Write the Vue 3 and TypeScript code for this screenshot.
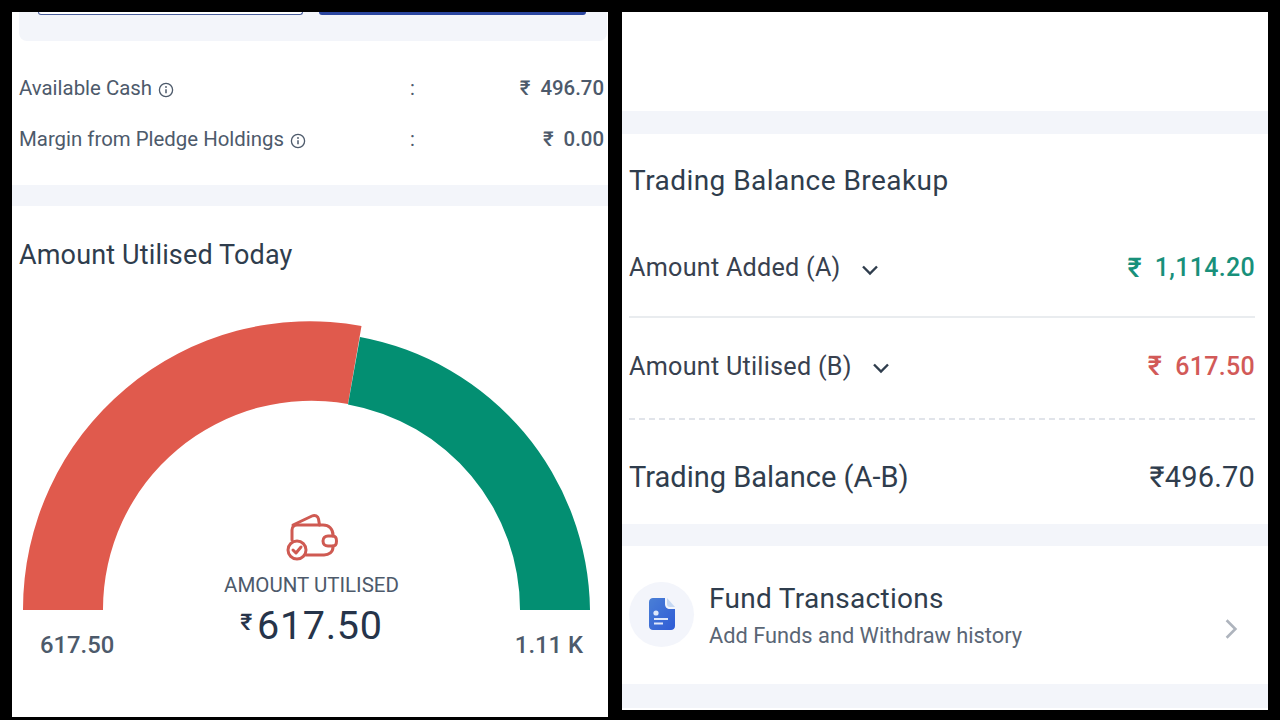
<template>
  <main class="screen">
    <section class="panel left">
      <div class="action-card">
        <div class="btn outline"></div>
        <div class="btn solid"></div>
      </div>

      <div class="cash-rows">
        <div v-for="row in cashRows" :key="row.label" class="cash-row">
          <span class="cash-label">
            {{ row.label }}
            <svg class="info" viewBox="0 0 16 16">
              <circle cx="8" cy="8" r="6.6" fill="none" stroke="currentColor" stroke-width="1.3" />
              <circle cx="8" cy="5" r="0.9" fill="currentColor" />
              <path d="M8 7.3v4" stroke="currentColor" stroke-width="1.5" />
            </svg>
          </span>
          <span class="colon">:</span>
          <span class="cash-value"><span class="rupee">₹</span>{{ row.value }}</span>
        </div>
      </div>

      <div class="band first-band"></div>

      <h2 class="gauge-title">Amount Utilised Today</h2>

      <div class="gauge">
        <svg class="arc" viewBox="0 0 596 300" width="596" height="300">
          <path fill="#e05a4d" d="M11 298 A287 288 0 0 1 349.500 14 L336 92 A208.500 208.500 0 0 0 91 298 Z" />
          <path fill="#038f72" d="M348 25 A281 281 0 0 1 578 298 L508 298 A208.500 208.500 0 0 0 336 92.500 Z" />
        </svg>
        <div class="gauge-center">
          <svg class="wallet" viewBox="0 0 52 50" fill="none" stroke="#cf5a52" stroke-width="3" stroke-linecap="round" stroke-linejoin="round">
            <path d="M6 27V17C6 14 8 12 11 12H37C43 12 47 16 47 22V23" />
            <path d="M7 12L26 3C29 1.500 32 3 32.500 6L33.500 12" />
            <path d="M47 33V34C47 39 43 42 38 42H20" />
            <path d="M42 23H47C49.500 23 50.500 25 50.500 28C50.500 31 49.500 33 47 33H42C39 33 37 31 37 28C37 25 39 23 42 23Z" />
            <circle cx="11" cy="37" r="9" />
            <path d="M7 37L10 40L15 34" />
          </svg>
          <div class="center-label">AMOUNT UTILISED</div>
          <div class="center-amount"><span class="center-rupee">₹</span>617.50</div>
        </div>
      </div>

      <div class="gauge-ends">
        <span>617.50</span>
        <span>1.11 K</span>
      </div>
    </section>

    <section class="panel right">
      <div class="top-blank"></div>
      <div class="band"></div>

      <div class="breakup">
        <h2 class="breakup-title">Trading Balance Breakup</h2>

        <div class="line added">
          <span class="line-label">
            Amount Added (A)
            <svg class="chev" viewBox="0 0 18 12"><path d="M2 2.500L9 9.500L16 2.500" /></svg>
          </span>
          <span class="amount green"><span class="rupee big">₹</span>1,114.20</span>
        </div>

        <div class="line utilised">
          <span class="line-label">
            Amount Utilised (B)
            <svg class="chev" viewBox="0 0 18 12"><path d="M2 2.500L9 9.500L16 2.500" /></svg>
          </span>
          <span class="amount red"><span class="rupee big">₹</span>617.50</span>
        </div>

        <div class="line total">
          <span class="total-label">Trading Balance (A-B)</span>
          <span class="total-value">₹496.70</span>
        </div>
      </div>

      <div class="band mid-band"></div>

      <div class="fund-row">
        <div class="doc-circle">
          <svg class="doc" viewBox="0 0 26 32">
            <defs>
              <linearGradient id="docFill" x1="0" y1="0" x2="1" y2="1">
                <stop offset="0" stop-color="#4a7fd6" />
                <stop offset="1" stop-color="#2f5cd6" />
              </linearGradient>
            </defs>
            <path fill="url(#docFill)" d="M4 0H16V6C16 9 18 11 21 11H26V28C26 30.500 24 32 22 32H4C2 32 0 30.500 0 28V4C0 1.500 2 0 4 0Z" />
            <path fill="#c6d8f3" d="M18 0L26 9H21C19 9 18 8 18 6Z" />
            <circle cx="7" cy="15" r="2.600" fill="#dfe8fa" />
            <path d="M5 21H19M5 25.500H14" stroke="#dfe8fa" stroke-width="2" />
          </svg>
        </div>
        <div class="fund-text">
          <div class="fund-title">Fund Transactions</div>
          <div class="fund-sub">Add Funds and Withdraw history</div>
        </div>
        <svg class="fund-arrow" viewBox="0 0 16 24"><path d="M3 2L13 12L3 22" /></svg>
      </div>

      <div class="band last-band"></div>
    </section>
  </main>
</template>

<script setup lang="ts">
const cashRows = [
  { label: 'Available Cash', value: '496.70' },
  { label: 'Margin from Pledge Holdings', value: '0.00' },
];
</script>

<style>
html,
body {
  margin: 0;
  background: #000;
}
</style>

<style scoped>
.screen {
  width: 1280px;
  height: 720px;
  background: #000;
  display: flex;
  align-items: flex-start;
  gap: 14px;
  padding: 12px 12px 0;
  box-sizing: border-box;
  overflow: hidden;
  font-family: Roboto, "Noto Sans", sans-serif;
  color: #2f3d4d;
}

.panel {
  background: #fff;
  flex-shrink: 0;
  overflow: hidden;
}
.panel.left {
  width: 596px;
  height: 705px;
}
.panel.right {
  width: 646px;
  height: 698px;
}

.band {
  height: 23px;
  background: #f3f5fa;
}

/* left side */
.action-card {
  margin-left: 7px;
  margin-right: 1px;
  height: 29px;
  background: #f3f5fa;
  border-radius: 0 0 8px 8px;
  display: flex;
  gap: 16px;
  padding-left: 19px;
  box-sizing: border-box;
}
.btn {
  height: 3px;
  border-radius: 0 0 4px 4px;
}
.btn.outline {
  width: 265px;
  box-sizing: border-box;
  background: #fff;
  border: 1px solid #4a5f9c;
  border-top: 0;
}
.btn.solid {
  width: 267px;
  background: #2b46a0;
}

.cash-rows {
  padding: 32px 4px 0 7px;
  height: 144px;
  box-sizing: border-box;
  display: flex;
  flex-direction: column;
  gap: 21px;
}
.cash-row {
  display: grid;
  grid-template-columns: 391px 30px 1fr;
  align-items: center;
  height: 30px;
  font-size: 20.400px;
  color: #4d5a6b;
}
.cash-label {
  display: flex;
  align-items: center;
  gap: 6px;
  white-space: nowrap;
}
.info {
  width: 16px;
  height: 16px;
  margin-top: 3px;
}
.colon {
  font-size: 20px;
}
.cash-value {
  text-align: right;
  font-weight: 500;
  white-space: nowrap;
}
.rupee {
  margin-right: 10px;
}
.rupee.big {
  font-size: 27px;
  margin-right: 13px;
}

.first-band {
  height: 21px;
}

.gauge-title {
  margin: 0;
  padding: 32px 0 0 7px;
  height: 65px;
  box-sizing: border-box;
  font-size: 27px;
  line-height: 34px;
  font-weight: 400;
  letter-spacing: 0.15px;
  color: #2f3d4d;
}

.gauge {
  position: relative;
  width: 596px;
  height: 300px;
  margin-top: 41px;
}
.arc {
  display: block;
}
.gauge-center {
  position: absolute;
  left: 150px;
  right: 147px;
  top: 201px;
  display: flex;
  flex-direction: column;
  align-items: center;
}
.wallet {
  width: 52px;
  height: 50px;
}
.center-label {
  margin-top: 10px;
  font-size: 20.500px;
  line-height: 24px;
  color: #4d5a6b;
  white-space: nowrap;
}
.center-amount {
  font-size: 39.500px;
  line-height: 46px;
  letter-spacing: 0.7px;
  color: #26344a;
  white-space: nowrap;
  display: flex;
  margin-top: 6px;
}
.center-rupee {
  font-size: 23px;
  font-weight: 500;
  line-height: 40px;
  margin-right: 4px;
}

.gauge-ends {
  display: flex;
  justify-content: space-between;
  padding: 16px 25px 0 28px;
  font-size: 23.800px;
  line-height: 34px;
  font-weight: 500;
  color: #4d5a6b;
}

/* right side */
.top-blank {
  height: 99px;
}
.breakup {
  height: 390px;
  padding: 0 13px 0 7px;
  box-sizing: border-box;
}
.breakup-title {
  margin: 0;
  padding-top: 29px;
  height: 91px;
  box-sizing: border-box;
  font-size: 28px;
  line-height: 36px;
  font-weight: 400;
  letter-spacing: 0.45px;
  color: #2f3d4d;
}
.line {
  display: flex;
  justify-content: space-between;
  align-items: center;
}
.line.added {
  height: 93px;
  border-bottom: 2px solid #e9ecef;
  box-sizing: border-box;
  padding-bottom: 6px;
}
.line.utilised {
  height: 102px;
  border-bottom: 2px dashed #e1e4ea;
  box-sizing: border-box;
  padding-bottom: 4px;
}
.line.total {
  height: 104px;
  padding-top: 10px;
  box-sizing: border-box;
}
.line-label {
  display: flex;
  align-items: center;
  gap: 20px;
  font-size: 25.200px;
  letter-spacing: 0.25px;
  color: #38414f;
}
.chev {
  width: 18px;
  height: 12px;
  margin-top: 4px;
  fill: none;
  stroke: #2f3d4d;
  stroke-width: 2.400;
}
.amount {
  font-size: 25px;
  font-weight: 500;
  letter-spacing: 0.3px;
  display: flex;
  align-items: center;
}
.amount.green {
  color: #18907a;
}
.amount.red {
  color: #d25a58;
}
.total-label {
  font-size: 29px;
  color: #2f3d4d;
}
.total-value {
  font-size: 29px;
  color: #2f3d4d;
  letter-spacing: 0.2px;
}

.mid-band {
  height: 22px;
}
.fund-row {
  height: 138px;
  display: flex;
  align-items: center;
  padding: 3px 30px 0 7px;
  box-sizing: border-box;
}
.doc-circle {
  width: 65px;
  height: 65px;
  margin-bottom: 5px;
  border-radius: 50%;
  background: #f3f5fb;
  display: flex;
  align-items: center;
  justify-content: center;
  flex-shrink: 0;
}
.doc {
  width: 26px;
  height: 32px;
}
.fund-text {
  flex: 1;
  margin-left: 15px;
}
.fund-title {
  font-size: 28px;
  line-height: 36px;
  letter-spacing: 0.3px;
  color: #2f3d4d;
}
.fund-sub {
  margin-top: 3px;
  font-size: 21.800px;
  line-height: 32px;
  color: #5a6675;
}
.fund-arrow {
  width: 14px;
  height: 22px;
  margin-top: 24px;
  fill: none;
  stroke: #aeb4bd;
  stroke-width: 3;
}
.last-band {
  height: 24px;
}
</style>
